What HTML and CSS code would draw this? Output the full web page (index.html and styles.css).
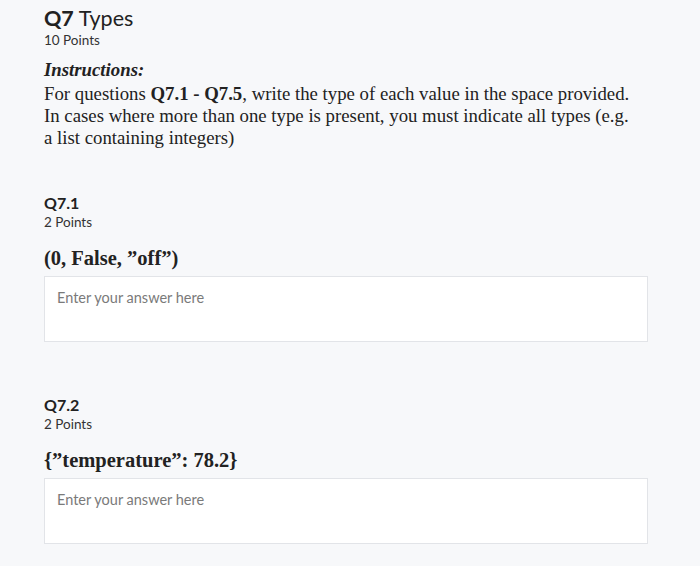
FILE: index.html
```html
<!DOCTYPE html>
<html>
<head>
<meta charset="utf-8">
<link rel="stylesheet" href="styles.css">
</head>
<body>
<div class="page">
  <section class="question">
    <h1 class="q-title"><strong>Q7</strong> Types</h1>
    <div class="points">10 Points</div>
    <div class="instructions">
      <p class="instr-head">Instructions:</p>
      <p class="instr-body">For questions <b>Q7.1 - Q7.5</b>, write the type of each value in the space provided. In cases where more than one type is present, you must indicate all types (e.g. a list containing integers)</p>
    </div>
  </section>
  <section class="sub">
    <h2 class="sub-title">Q7.1</h2>
    <div class="points">2 Points</div>
    <p class="value">(0, False, ”off”)</p>
    <div class="answer">Enter your answer here</div>
  </section>
  <section class="sub">
    <h2 class="sub-title">Q7.2</h2>
    <div class="points">2 Points</div>
    <p class="value">{”temperature”: 78.2}</p>
    <div class="answer">Enter your answer here</div>
  </section>
</div>
</body>
</html>
```

FILE: styles.css
```css
html, body {
  margin: 0;
  padding: 0;
  background: #f7f8fa;
}
.page {
  padding: 5px 52px 0 44px;
  font-family: "Lato", "Noto Sans", sans-serif;
  color: #222;
}
.q-title {
  margin: 0;
  font-size: 21.5px;
  font-weight: 400;
  line-height: 26px;
  color: #222;
}
.q-title strong { font-weight: 700; }
.points {
  font-size: 13.5px;
  line-height: 18px;
  color: #333;
}
.instructions {
  margin-top: 10px;
  font-family: "Liberation Serif", serif;
  font-size: 18.8px;
  line-height: 22px;
  color: #222;
}
.instructions p { margin: 0; }
.instr-head { font-weight: 700; font-style: italic; }
.instr-body { max-width: 592px; margin-top: 2px !important; }
.sub { margin-top: 44px; }
.sub + .sub { margin-top: 53px; }
.sub-title {
  margin: 0;
  font-size: 16px;
  font-weight: 700;
  line-height: 20px;
}
.value {
  margin: 16px 0 7px;
  font-family: "Liberation Serif", serif;
  font-weight: 700;
  font-size: 20.5px;
  line-height: 22px;
}
.answer {
  height: 66px;
  box-sizing: border-box;
  background: #fff;
  border: 1px solid #e2e4e8;
  padding: 12px 12px;
  font-size: 14.5px;
  color: #7a7a7a;
}
```
